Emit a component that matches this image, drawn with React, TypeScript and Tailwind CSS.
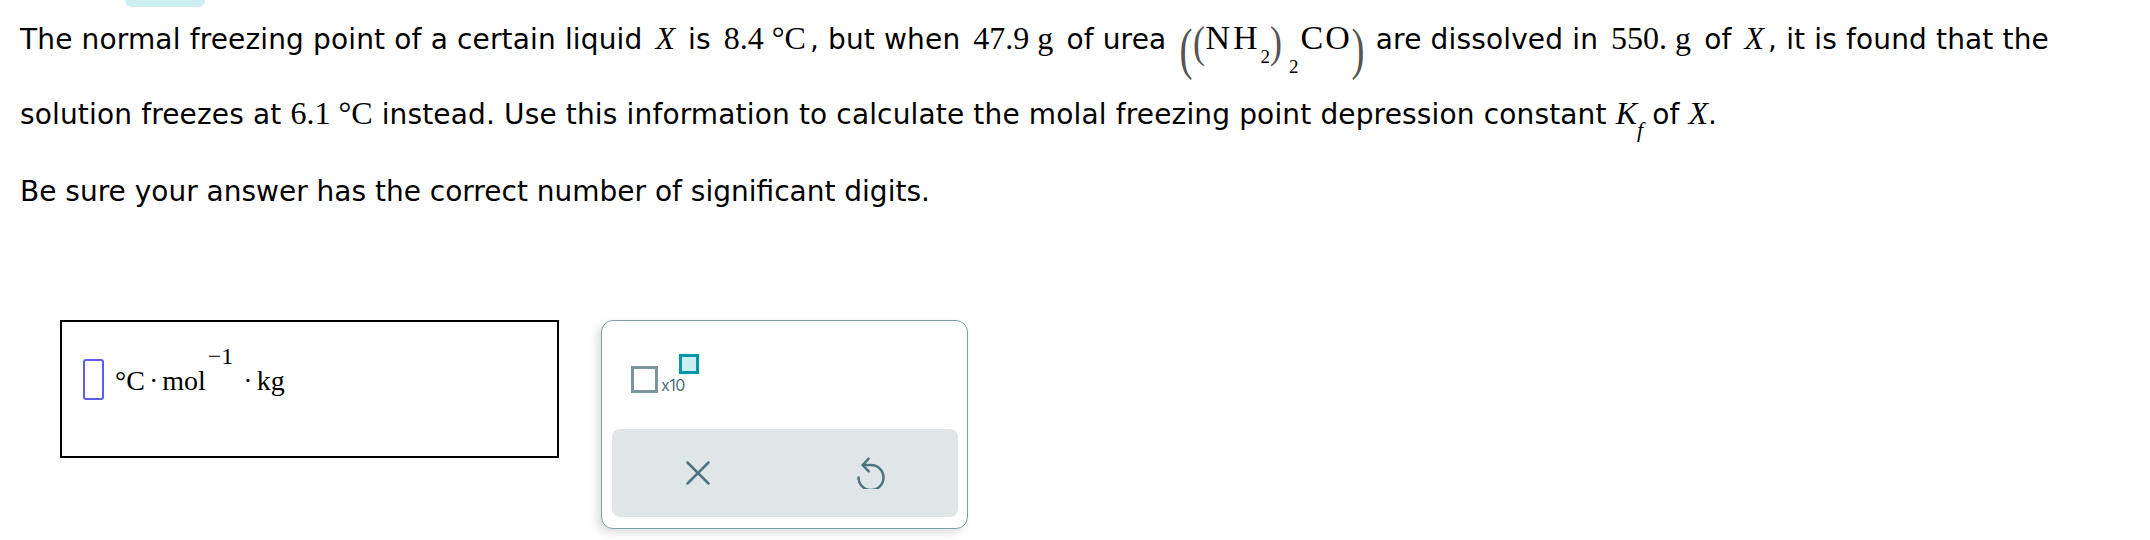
import React from 'react';

function M({ children, i }: { children: React.ReactNode; i?: boolean }) {
  return (
    <span className={`font-['Liberation_Serif',serif] text-[32px] tracking-normal ${i ? 'italic' : ''}`}>{children}</span>
  );
}

function Urea() {
  return (
    <span className="font-['Liberation_Serif',serif] text-[34px] tracking-normal whitespace-nowrap">
      <span className="ml-[2px] inline-block text-[30px] leading-[30px] text-[#555] scale-x-[1.3] scale-y-[1.9] translate-y-[10px]">(</span>
      <span className="ml-[3px] inline-block text-[30px] leading-[30px] text-[#555] scale-x-[1.2] scale-y-[1.45] translate-y-[3px]">(</span>
      <span className="ml-[1px] tracking-[3px]">NH</span>
      <span className="relative top-[14px] text-[19px]">2</span>
      <span className="ml-[1px] inline-block text-[30px] leading-[30px] text-[#555] scale-x-[1.2] scale-y-[1.45] translate-y-[3px]">)</span>
      <span className="relative top-[24px] ml-[8px] text-[19px]">2</span>
      <span className="ml-[2px] tracking-[2px]">CO</span>
      <span className="ml-[1px] inline-block text-[30px] leading-[30px] text-[#555] scale-x-[1.3] scale-y-[1.9] translate-y-[10px]">)</span>
    </span>
  );
}

function UndoIcon() {
  return (
    <svg width="32" height="32" viewBox="0 0 32 32" fill="none" stroke="#4d7480" strokeWidth="2.5" strokeLinecap="round" strokeLinejoin="round">
      <path d="M7.7 8 H16 A12.5 12.5 0 1 1 3.5 20.5" />
      <path d="M13.7 1.7 L7.7 8 L13.7 14.3" />
    </svg>
  );
}

function CloseIcon() {
  return (
    <svg width="24" height="24" viewBox="0 0 24 24" fill="none" stroke="#4d7480" strokeWidth="2.5" strokeLinecap="round">
      <path d="M1.5 1.5 L22.5 22.5" />
      <path d="M22.5 1.5 L1.5 22.5" />
    </svg>
  );
}

export default function App() {
  return (
    <div className="min-h-[540px] bg-white pl-5 font-['DejaVu_Sans',Verdana,sans-serif] text-[28px] text-black">
      {/* partly visible tab */}
      <div className="ml-[105px] h-[7px] w-[80px] rounded-b-[10px] bg-[#cdeef3]" />

      <p className="-mt-1 leading-[70px] tracking-[0.15px] whitespace-nowrap">
        The normal freezing point of a certain liquid <span className="mx-[4px]"><M i>X</M></span> is{' '}
        <span className="mx-[4px]"><M>8.4 °C</M></span>, but when <span className="mx-[4px]"><M>47.9 g</M></span> of urea{' '}
        <span className="mx-[4px]"><Urea /></span> are dissolved in <span className="mx-[4px]"><M>550. g</M></span> of{' '}
        <span className="mx-[4px]"><M i>X</M></span>, it is found that the
        <br />
        solution freezes at <M>6.1 °C</M> instead. Use this information to calculate the molal freezing point depression
        constant{' '}
        <M i>
          K<span className="relative top-[13px] text-[22px]">f</span>
        </M>{' '}
        of <M i>X</M>.
      </p>

      <p className="mt-[5px] leading-[70px]">Be sure your answer has the correct number of significant digits.</p>

      <div className="mt-[93px] flex items-start gap-[42px] pl-10">
        {/* answer field */}
        <div className="h-[138px] w-[499px] border-2 border-black pl-[21px] pt-[37px]">
          <div className="flex items-start">
            <div className="h-[41px] w-[21px] rounded-[3px] border-2 border-[#5b5cf6]" />
            <span className="ml-[11px] mt-[8px] font-['Liberation_Serif',serif] text-[28px] leading-[28px] whitespace-nowrap">
              °C<span className="mx-[4px]">·</span>mol
              <span className="relative -top-[26px] ml-[2px] text-[24px]">−1</span>
              <span className="ml-[10px] mr-[4px]">·</span>kg
            </span>
          </div>
        </div>

        {/* tool panel */}
        <div className="flex h-[209px] w-[367px] flex-col rounded-[12px] border-[1.5px] border-[#7f9ea6] bg-white shadow-[-4px_4px_8px_rgba(0,0,0,0.13)]">
          <div className="h-[108px] pl-[29px] pt-[45px]">
            <div className="relative flex items-end">
              <div className="h-[27px] w-[27px] border-[3px] border-[#7b959d]" />
              <span className="ml-[3px] font-['Inter',sans-serif] text-[16px] leading-none tracking-[-0.5px] text-[#4e6f78]">x10</span>
              <div className="absolute left-[48px] top-[-12px] h-[20px] w-[20px] border-[3px] border-[#0097a7] bg-[#cdeef3]" />
            </div>
          </div>
          <div className="mx-[9.5px] grid h-[88px] grid-cols-2 items-center rounded-[8px] bg-[#e0e6e8]">
            <div className="flex justify-center">
              <CloseIcon />
            </div>
            <div className="flex justify-center">
              <UndoIcon />
            </div>
          </div>
        </div>
      </div>
    </div>
  );
}
